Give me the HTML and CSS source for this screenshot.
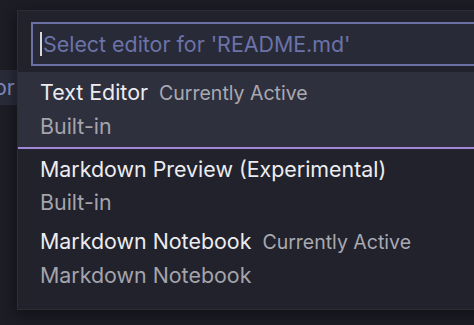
FILE: index.html
```html
<!DOCTYPE html>
<html lang="en">

<head>
    <meta charset="UTF-8">
    <meta name="viewport" content="width=device-width, initial-scale=1.0">
    <title>Select editor</title>
    <link rel="stylesheet" href="styles.css">
</head>

<body>
    <div class="workbench">
        <!-- Tab strip behind the quick pick -->
        <div class="tab-strip">
            <span class="tab">Editor</span>
        </div>

        <!-- Quick pick -->
        <div class="quick-pick">
            <div class="quick-input">
                <span class="caret"></span>
                <span class="placeholder">Select editor for 'README.md'</span>
            </div>

            <div class="pick-list">
                <div class="pick-item selected">
                    <div class="pick-label">Text Editor <span class="pick-desc">Currently Active</span></div>
                    <div class="pick-detail">Built-in</div>
                </div>
                <div class="pick-item">
                    <div class="pick-label">Markdown Preview (Experimental)</div>
                    <div class="pick-detail">Built-in</div>
                </div>
                <div class="pick-item">
                    <div class="pick-label">Markdown Notebook <span class="pick-desc">Currently Active</span></div>
                    <div class="pick-detail">Markdown Notebook</div>
                </div>
            </div>
        </div>
    </div>
</body>

</html>
```

FILE: styles.css
```css
body {
    margin: 0;
    background-color: #1c1d25;
    font-family: Inter, 'Noto Sans', sans-serif;
    overflow: hidden;
}

.workbench {
    position: relative;
    width: 474px;
    height: 325px;
}

.tab-strip {
    padding-top: 70px;
}

.tab {
    display: inline-block;
    background-color: #292b39;
    color: #8189bd;
    font-size: 21.4px;
    line-height: 35px;
    margin-left: -44px;
    padding-right: 10px;
}

.quick-pick {
    position: absolute;
    left: 17px;
    top: 10px;
    width: 480px;
    height: 300px;
    background-color: #21222c;
    border: 1px solid #2c2d38;
    box-shadow: 0 4px 14px rgba(0, 0, 0, 0.45);
    padding-top: 11px;
    box-sizing: border-box;
}

.quick-input {
    display: flex;
    align-items: center;
    height: 44px;
    margin-left: 13px;
    padding-left: 7px;
    background-color: #292a37;
    border: 2px solid #6c70a4;
    border-right: none;
    box-sizing: border-box;
}

.caret {
    width: 2px;
    height: 24px;
    background-color: #d8d8e0;
    margin-right: 1px;
}

.placeholder {
    color: #6b73a8;
    font-size: 21.4px;
}

.pick-list {
    margin-top: 6px;
}

.pick-item {
    padding: 4px 22px 2px;
}

.pick-item.selected {
    background-color: #2f303d;
    padding-bottom: 4px;
    border-bottom: 2px solid #a287d6;
}

.pick-label {
    color: #ececf0;
    font-size: 21.4px;
    line-height: 33px;
    white-space: nowrap;
}

.pick-desc {
    color: #a9a9b2;
    font-size: 19.5px;
    margin-left: 5px;
}

.pick-detail {
    color: #a4a4ad;
    font-size: 21.4px;
    line-height: 33px;
}
```
